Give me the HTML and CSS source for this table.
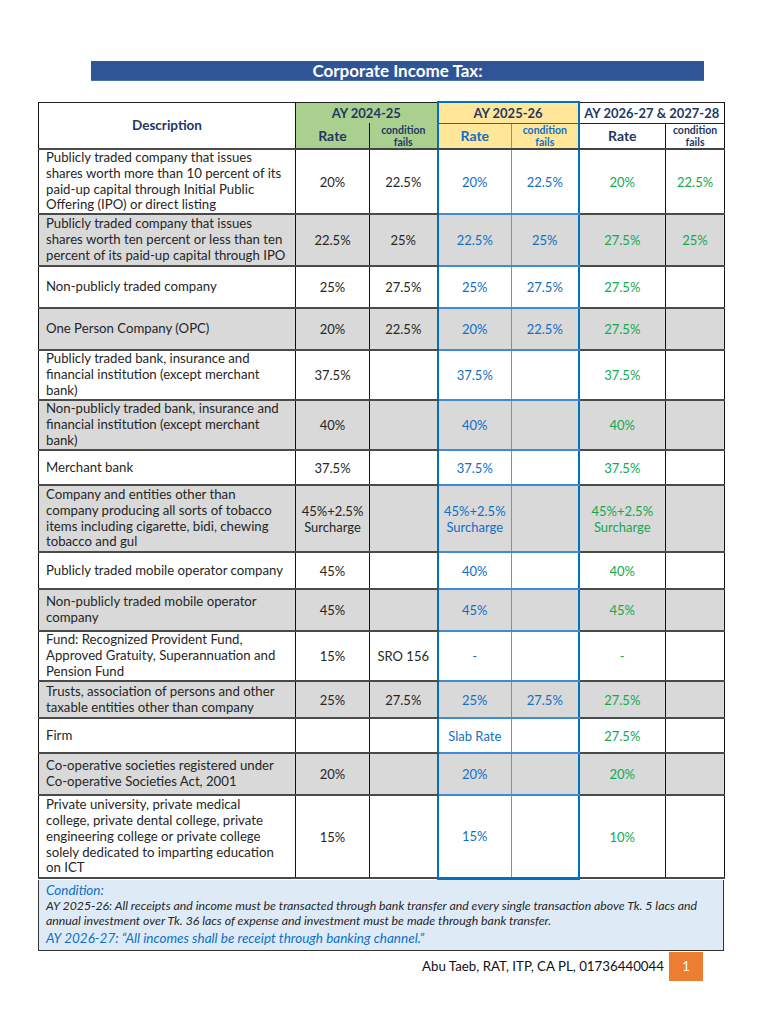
FILE: index.html
```html
<!DOCTYPE html>
<html>
<head>
    <title>Corporate Income Tax</title>
    <link rel="stylesheet" href="styles.css">
</head>
<body>
    <div class="page">
        <div class="title-bar">Corporate Income Tax:</div>

        <table class="tax-table">
            <colgroup>
                <col style="width: 257px">
                <col style="width: 74px">
                <col style="width: 68px">
                <col style="width: 74px">
                <col style="width: 67px">
                <col style="width: 87px">
                <col style="width: 59px">
            </colgroup>
            <thead>
                <tr class="head-top">
                    <th rowspan="2" class="desc-head">Description</th>
                    <th colspan="2" class="green ay-green">AY 2024-25</th>
                    <th colspan="2" class="yellow grp-head">AY 2025-26</th>
                    <th colspan="2" class="plain">AY 2026-27 &amp; 2027-28</th>
                </tr>
                <tr class="head-sub">
                    <th class="green rate">Rate</th>
                    <th class="green cond">condition<br>fails</th>
                    <th class="yellow rate b1">Rate</th>
                    <th class="yellow cond b2">condition<br>fails</th>
                    <th class="plain rate">Rate</th>
                    <th class="plain cond">condition<br>fails</th>
                </tr>
            </thead>
            <tbody>
                <tr style="height: 65px">
                    <td class="desc">Publicly traded company that issues<br>shares worth more than 10 percent of its<br>paid-up capital through Initial Public<br>Offering (IPO) or direct listing</td>
                    <td>20%</td><td>22.5%</td>
                    <td class="b1">20%</td><td class="b2">22.5%</td>
                    <td class="g">20%</td><td class="g">22.5%</td>
                </tr>
                <tr class="grey" style="height: 52px">
                    <td class="desc">Publicly traded company that issues<br>shares worth ten percent or less than ten<br>percent of its paid-up capital through IPO</td>
                    <td>22.5%</td><td>25%</td>
                    <td class="b1">22.5%</td><td class="b2">25%</td>
                    <td class="g">27.5%</td><td class="g">25%</td>
                </tr>
                <tr style="height: 42px">
                    <td class="desc">Non-publicly traded company</td>
                    <td>25%</td><td>27.5%</td>
                    <td class="b1">25%</td><td class="b2">27.5%</td>
                    <td class="g">27.5%</td><td></td>
                </tr>
                <tr class="grey" style="height: 42px">
                    <td class="desc">One Person Company (OPC)</td>
                    <td>20%</td><td>22.5%</td>
                    <td class="b1">20%</td><td class="b2">22.5%</td>
                    <td class="g">27.5%</td><td></td>
                </tr>
                <tr style="height: 50px">
                    <td class="desc">Publicly traded bank, insurance and<br>financial institution (except merchant<br>bank)</td>
                    <td>37.5%</td><td></td>
                    <td class="b1">37.5%</td><td class="b2"></td>
                    <td class="g">37.5%</td><td></td>
                </tr>
                <tr class="grey" style="height: 50px">
                    <td class="desc">Non-publicly traded bank, insurance and<br>financial institution (except merchant<br>bank)</td>
                    <td>40%</td><td></td>
                    <td class="b1">40%</td><td class="b2"></td>
                    <td class="g">40%</td><td></td>
                </tr>
                <tr style="height: 35px">
                    <td class="desc">Merchant bank</td>
                    <td>37.5%</td><td></td>
                    <td class="b1">37.5%</td><td class="b2"></td>
                    <td class="g">37.5%</td><td></td>
                </tr>
                <tr class="grey" style="height: 67px">
                    <td class="desc">Company and entities other than<br>company producing all sorts of tobacco<br>items including cigarette, bidi, chewing<br>tobacco and gul</td>
                    <td>45%+2.5%<br>Surcharge</td><td></td>
                    <td class="b1">45%+2.5%<br>Surcharge</td><td class="b2"></td>
                    <td class="g">45%+2.5%<br>Surcharge</td><td></td>
                </tr>
                <tr style="height: 37px">
                    <td class="desc">Publicly traded mobile operator company</td>
                    <td>45%</td><td></td>
                    <td class="b1">40%</td><td class="b2"></td>
                    <td class="g">40%</td><td></td>
                </tr>
                <tr class="grey" style="height: 42px">
                    <td class="desc">Non-publicly traded mobile operator<br>company</td>
                    <td>45%</td><td></td>
                    <td class="b1">45%</td><td class="b2"></td>
                    <td class="g">45%</td><td></td>
                </tr>
                <tr style="height: 50px">
                    <td class="desc">Fund: Recognized Provident Fund,<br>Approved Gratuity, Superannuation and<br>Pension Fund</td>
                    <td>15%</td><td>SRO 156</td>
                    <td class="b1">-</td><td class="b2"></td>
                    <td class="g">-</td><td></td>
                </tr>
                <tr class="grey" style="height: 37px">
                    <td class="desc">Trusts, association of persons and other<br>taxable entities other than company</td>
                    <td>25%</td><td>27.5%</td>
                    <td class="b1">25%</td><td class="b2">27.5%</td>
                    <td class="g">27.5%</td><td></td>
                </tr>
                <tr style="height: 35px">
                    <td class="desc">Firm</td>
                    <td></td><td></td>
                    <td class="b1">Slab Rate</td><td class="b2"></td>
                    <td class="g">27.5%</td><td></td>
                </tr>
                <tr class="grey" style="height: 42px">
                    <td class="desc">Co-operative societies registered under<br>Co-operative Societies Act, 2001</td>
                    <td>20%</td><td></td>
                    <td class="b1">20%</td><td class="b2"></td>
                    <td class="g">20%</td><td></td>
                </tr>
                <tr class="last" style="height: 83px">
                    <td class="desc">Private university, private medical<br>college, private dental college, private<br>engineering college or private college<br>solely dedicated to imparting education<br>on ICT</td>
                    <td>15%</td><td></td>
                    <td class="b1">15%</td><td class="b2"></td>
                    <td class="g">10%</td><td></td>
                </tr>
            </tbody>
        </table>

        <div class="condition">
            <div class="cond-title">Condition:</div>
            <p class="cond-text">AY 2025-26: All receipts and income must be transacted through bank transfer and every single transaction above Tk. 5 lacs and<br>annual investment over Tk. 36 lacs of expense and investment must be made through bank transfer.</p>
            <div class="cond-note">AY 2026-27: “All incomes shall be receipt through banking channel.”</div>
        </div>

        <div class="footer">
            <span class="author">Abu Taeb, RAT, ITP, CA PL, 01736440044</span>
            <span class="page-no">1</span>
        </div>
    </div>
</body>
</html>
```

FILE: styles.css
```css
* {
    margin: 0;
    padding: 0;
    box-sizing: border-box;
}
body {
    font-family: 'Lato', 'Liberation Sans', sans-serif;
    background-color: #fff;
    color: #262626;
    width: 768px;
    height: 1024px;
}
.page {
    padding-top: 61px;
}
/* Blue title bar */
.title-bar {
    margin-left: 91px;
    width: 613px;
    height: 20px;
    background-color: #2f5597;
    border-bottom: 1px solid #4a70b0;
    color: #fff;
    font-weight: bold;
    font-size: 17px;
    line-height: 20px;
    text-align: center;
}
/* Main table */
.tax-table {
    margin-top: 20px;
    margin-left: 38px;
    width: 686px;
    table-layout: fixed;
    border-collapse: collapse;
    border: 1px solid #222;
    font-size: 13px;
}
.tax-table th,
.tax-table td {
    border-left: 1px solid #111;
    border-right: 1px solid #111;
    text-align: center;
    vertical-align: middle;
    line-height: 16px;
}
.tax-table th {
    color: #1f3864;
    font-weight: bold;
}
.head-top th {
    height: 21px;
    font-size: 13px;
    border-top: 1px solid #222;
    border-bottom: 1px solid #222;
}
.head-top th.desc-head {
    font-size: 13.5px;
}
.head-sub th {
    height: 26px;
    border-bottom: 2px solid #444;
}
.desc-head {
    background-color: #fff;
}
.green {
    background-color: #a9d08e;
}
.yellow {
    background-color: #ffe699;
}
.plain {
    background-color: #fff;
}
.tax-table th.ay-green {
    border-bottom: hidden;
}
.rate {
    font-size: 14px;
}
.cond {
    font-size: 10.5px;
    line-height: 12px !important;
    font-weight: bold;
}
.grp-head {
    border-left: 2px solid #0070c0 !important;
    border-right: 2px solid #0070c0 !important;
    border-top: 2px solid #0070c0 !important;
    border-bottom: 1px solid #0070c0 !important;
}
/* Body rows */
.tax-table td {
    border-top: 2px solid #4a4a4a;
    border-bottom: 2px solid #4a4a4a;
}
.tax-table tr.grey td {
    background-color: #d9d9d9;
}
.tax-table td.desc {
    text-align: left;
    white-space: nowrap;
    font-size: 13.2px;
    line-height: 15.8px;
    padding: 0 4px 0 7px;
}
/* AY 2025-26 group, outlined in blue */
.tax-table .b1 {
    color: #0f6fc6;
    border-left: 2px solid #0070c0;
    border-right: 1px solid #5b9bd5;
}
.tax-table .b2 {
    color: #0f6fc6;
    border-right: 2px solid #0070c0;
    border-left: 1px solid #5b9bd5;
}
.tax-table td.b1,
.tax-table td.b2 {
    border-top: 2px solid #3d8bd8;
    border-bottom: 2px solid #3d8bd8;
}
.tax-table tr.last td.b1,
.tax-table tr.last td.b2 {
    border-bottom: 3px solid #0070c0;
}
.tax-table td.g {
    color: #12a84e;
}
/* Condition box under the table */
.condition {
    margin-left: 38px;
    width: 686px;
    height: 71px;
    background-color: #deebf7;
    border: 1px solid #333;
    border-top: none;
    padding: 2px 8px 0 7px;
    font-style: italic;
}
.cond-title {
    color: #0f6fc6;
    font-size: 13.5px;
    line-height: 16px;
}
.cond-text {
    color: #262626;
    font-size: 12.3px;
    line-height: 15px;
    white-space: nowrap;
}
.cond-note {
    color: #0f6fc6;
    font-size: 13.5px;
    line-height: 16px;
    margin-top: 2px;
}
/* Footer with page number */
.footer {
    display: flex;
    justify-content: flex-end;
    align-items: center;
    width: 703px;
    margin-top: 1px;
}
.author {
    font-size: 13.3px;
    color: #111;
    margin-right: 5px;
}
.page-no {
    width: 34px;
    height: 29px;
    background-color: #ed7d31;
    color: #fff;
    font-size: 13px;
    line-height: 29px;
    text-align: center;
}
```
